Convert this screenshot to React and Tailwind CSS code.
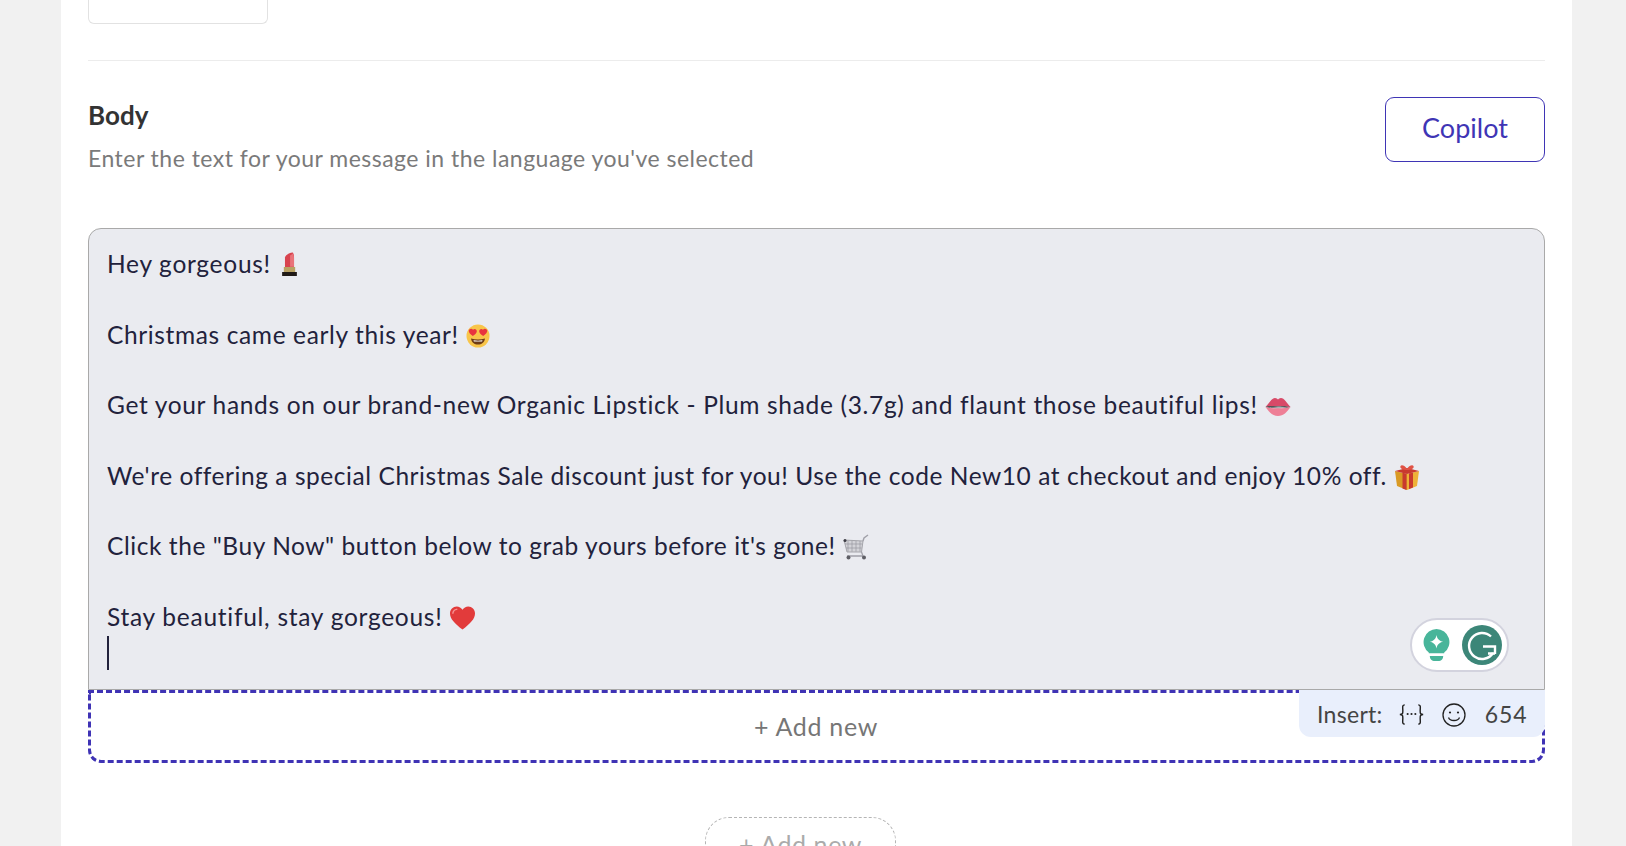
const FONT = 'font-["Lato","Noto_Sans",sans-serif]';

function Lipstick() {
  return (
    <svg viewBox="4.500 0 15 24" preserveAspectRatio="none" className="inline-block w-[17px] h-6 ml-[3px] align-[-3px]" role="img" aria-label="lipstick">
      <path d="M8 15V5.500C8 3.500 12 .5 15 0.500c.8 1.500 1 3 1 5V15z" fill="#d8434f" />
      <path d="M12.500 14.800V3.500c1-.8 1.800-1.500 2.500-2 .6 1.500 1 3 1 4.500v8.800z" fill="#e9737a" />
      <rect x="7" y="15" width="10" height="5" fill="#b9a263" />
      <rect x="5.500" y="20" width="13" height="4" fill="#201a17" />
    </svg>
  );
}

function HeartEyes() {
  return (
    <svg viewBox="0 0 24 24" className="inline-block w-6 h-6 align-[-4px]" role="img" aria-label="heart eyes">
      <circle cx="12" cy="12" r="11.500" fill="#f8c54a" />
      <path d="M5 14.500c4.500 1.200 9.500 1.200 14 0-.6 4-3.500 6-7 6s-6.400-2-7-6z" fill="#6d3b17" />
      <path d="M7.500 16.300c3 .5 6 .5 9 0l-.4 1.300H7.900z" fill="#fff" />
      <path d="M6.800 12C4 10 2.500 8.500 2.800 6.600 3.200 4.500 6 4 7 5.800 8.500 4.200 11 5.300 10.800 7.500 10.600 9.300 8.800 10.700 6.800 12z" fill="#e8343f" />
      <path d="M17.200 12c-2-1.300-3.800-2.700-4-4.500C13 5.300 15.500 4.200 17 5.800c1-1.800 3.800-1.300 4.200.8.300 1.900-1.200 3.400-4 5.400z" fill="#e8343f" />
    </svg>
  );
}

function Lips() {
  return (
    <svg viewBox="0 0 26 20" className="inline-block w-[26px] h-5 align-[-3px]" role="img" aria-label="lips">
      <path d="M0.500 10C4 6 7 1 10 1c1.500 0 2.300.8 3 1.500C13.700 1.800 14.500 1 16 1c3 0 6 5 9.500 9C20 8.500 6 8.500.5 10z" fill="#d84a68" />
      <path d="M0.500 10c6-1.500 19-1.500 25 0-5 1.500-20 1.500-25 0z" fill="#2c2a2e" />
      <path d="M4 10.200c5-.9 13-.9 18 0-5 .7-13 .7-18 0z" fill="#d9dde0" />
      <path d="M0.500 10c5 1.800 20 1.800 25 0-3.500 5-7 9-12.500 9S4 15 .5 10z" fill="#ee7f96" />
    </svg>
  );
}

function Gift() {
  return (
    <svg viewBox="0 0 26 26" className="inline-block w-[26px] h-[26px] align-[-5px]" role="img" aria-label="gift">
      <path d="M1 7l12 3v16L3 22z" fill="#d99a24" />
      <path d="M25 7l-12 3v16l10-4z" fill="#eeb238" />
      <path d="M1 7l12-3 12 3-12 3z" fill="#c93a2e" />
      <path d="M8.500 8.800l4 1V26l-4-1.600zM15 9.500l4-1v14.900L15 25z" fill="#c93a2e" />
      <path d="M13 6C9 6 5.500 4.500 6.500 2 8 .2 11.500 2.500 13 5c1.500-2.500 5-4.800 6.500-3 1 2.500-2.500 4-6.500 4z" fill="#e05245" />
    </svg>
  );
}

function Cart() {
  return (
    <svg viewBox="0 0 26 26" className="inline-block w-[26px] h-[26px] align-[-5px]" role="img" aria-label="shopping cart">
      <path d="M1 6l19 1-1.500 11H4z" fill="#d3d3d8" stroke="#a5a5ab" strokeWidth="1" />
      <path d="M5 6.500v11M9 6.800v10.800M13 7v10.500M17 7v10.500M2 10h17M3 14h15.500" stroke="#9a9aa2" strokeWidth=".7" fill="none" />
      <path d="M20 7l1-3 4-3" stroke="#a0a0a8" strokeWidth="1.400" fill="none" />
      <path d="M18.500 18l1.500 4H4" stroke="#a0a0a8" strokeWidth="1.300" fill="none" />
      <circle cx="5.500" cy="23.500" r="2" fill="#5f5f66" />
      <circle cx="21" cy="23.500" r="2" fill="#5f5f66" />
      <circle cx="2" cy="6.500" r="1.500" fill="#3c3c44" />
    </svg>
  );
}

function Heart() {
  return (
    <svg viewBox="0 0 26 24" className="inline-block w-[25px] h-6 align-[-4px]" role="img" aria-label="heart">
      <path d="M13 24C5 17.500 0 13 0 7.200 0 3 3.200 0 7 0c2.500 0 4.700 1.300 6 3.500C14.300 1.300 16.500 0 19 0c3.800 0 7 3 7 7.200C26 13 21 17.500 13 24z" fill="#e23b3b" />
      <path d="M3 7c.2-2 1.800-3.700 4-4" stroke="#f79090" strokeWidth="1.500" fill="none" strokeLinecap="round" />
    </svg>
  );
}

function GrammarlyBadge() {
  return (
    <div className="absolute left-[1322px] top-[390px] flex items-center gap-[12px] h-[54px] w-[99px] pl-[11px] rounded-full bg-white border-2 border-[#d3d3de]">
      <svg viewBox="0 0 28 34" className="w-[27px] h-[33px]">
        <path d="M14 0a13.500 13.500 0 0 1 8 24.300V25H6v-.700A13.500 13.500 0 0 1 14 0z" fill="#48b59a" />
        <path d="M14 6c.8 4.200 2.800 6.200 7 7-4.200.8-6.200 2.800-7 7-.8-4.200-2.800-6.200-7-7 4.200-.8 6.200-2.800 7-7z" fill="#fff" />
        <path d="M7 28h14c0 3-2 5-4 5h-6c-2 0-4-2-4-5z" fill="#48b59a" />
      </svg>
      <svg viewBox="0 0 40 40" className="w-[40px] h-[40px]">
        <circle cx="20" cy="20" r="20" fill="#3c8678" />
        <path d="M29 11.500A13 13 0 1 0 31 28" stroke="#fff" strokeWidth="2.400" fill="none" />
        <path d="M21 21.500h12v7.500M26 28.500h7" stroke="#fff" strokeWidth="2.400" fill="none" />
      </svg>
    </div>
  );
}

function InsertBar() {
  return (
    <div className="absolute -right-[3px] -top-[3px] flex items-center w-[246px] h-[47px] pl-[18px] pt-[2px] rounded-b-[12px] bg-[#e9effc] text-[#444444] text-[23px] tracking-[0.3px]">
      <span>Insert:</span>
      <svg viewBox="0 0 28 24" className="w-[27px] h-[25px] ml-[15px]" fill="none" stroke="#222" strokeWidth="1.500">
        <path d="M7 2C4 2 5 5 5 8s0 3.500-3 4c3 .5 3 1 3 4s-1 6 2 6M21 2c3 0 2 3 2 6s0 3.500 3 4c-3 .5-3 1-3 4s1 6-2 6" />
        <circle cx="10" cy="11.500" r="1.100" fill="#222" stroke="none" />
        <circle cx="14" cy="11.500" r="1.100" fill="#222" stroke="none" />
        <circle cx="18" cy="11.500" r="1.100" fill="#222" stroke="none" />
      </svg>
      <svg viewBox="0 0 24 24" className="w-6 h-6 ml-[17px]" fill="none" stroke="#222" strokeWidth="1.300">
        <circle cx="12" cy="12" r="11" />
        <circle cx="8" cy="9.500" r="1.100" fill="#222" stroke="none" />
        <circle cx="16" cy="9.500" r="1.100" fill="#222" stroke="none" />
        <path d="M6.500 14.500c1.500 4 9.500 4 11 0" />
      </svg>
      <span className="ml-[19px] tracking-[0.9px]">654</span>
    </div>
  );
}

export default function App() {
  return (
    <div className={`${FONT} h-screen overflow-hidden bg-[#f1f1f1] pl-[61px] pr-[54px]`}>
      <div className="h-full bg-white px-[27px]">
        <div className="w-[180px] h-[24px] border border-t-0 border-[#e2e2e2] rounded-b-[6px]" />
        <div className="mt-[36px] h-px bg-[#ececec]" />

        <div className="mt-[36px] h-[65px] flex justify-between items-start">
          <div>
            <h2 className="text-[26px] leading-[36px] font-bold text-[#333333]">Body</h2>
            <p className="mt-[8px] text-[23px] leading-[34px] tracking-[0.48px] text-[#7a7a7a]">Enter the text for your message in the language you've selected</p>
          </div>
          <button className="w-[160px] h-[65px] pb-[2px] rounded-[9px] border border-[#3f35b5] text-[27px] text-[#3f35b5]">Copilot</button>
        </div>

        <div className="relative mt-[66px]">
          <div className="h-[462px] rounded-t-[13px] border border-[#a9a9a9] bg-[#eaebf0] px-[18px] pt-[17px] text-[24.5px] leading-[35.3px] tracking-[0.56px] text-[#22223c]">
            <p className="tracking-[0.72px]">Hey gorgeous! <Lipstick /></p>
            <p className="mt-[35.3px] tracking-[0.63px]">Christmas came early this year! <HeartEyes /></p>
            <p className="mt-[35.3px] tracking-[0.67px]">Get your hands on our brand-new Organic Lipstick - Plum shade (3.7g) and flaunt those beautiful lips! <Lips /></p>
            <p className="mt-[35.3px]">We're offering a special Christmas Sale discount just for you! Use the code New10 at checkout and enjoy 10% off. <Gift /></p>
            <p className="mt-[35.3px]">Click the "Buy Now" button below to grab yours before it's gone! <Cart /></p>
            <p className="mt-[35.3px] tracking-[0.73px]">Stay beautiful, stay gorgeous! <Heart /></p>
            <div className="mt-[2px] w-[2px] h-[34px] bg-[#22223c]" />
          </div>
          <GrammarlyBadge />
          <div className="relative h-[73px] pt-[1px] rounded-b-[13px] border-[3px] border-dashed border-[#3f33b5] flex items-center justify-center text-[25px] tracking-[0.7px] text-[#767676]">
            <span className="pr-[1px]">+ Add new</span>
            <InsertBar />
          </div>
        </div>

        <div className="mt-[54px] ml-[617px] w-[191px] h-[60px] rounded-[24px] border border-dashed border-[#b5b5b5] pt-[8px] text-center text-[25px] tracking-[0.6px] text-[#ababab]">+ Add new</div>
      </div>
    </div>
  );
}
